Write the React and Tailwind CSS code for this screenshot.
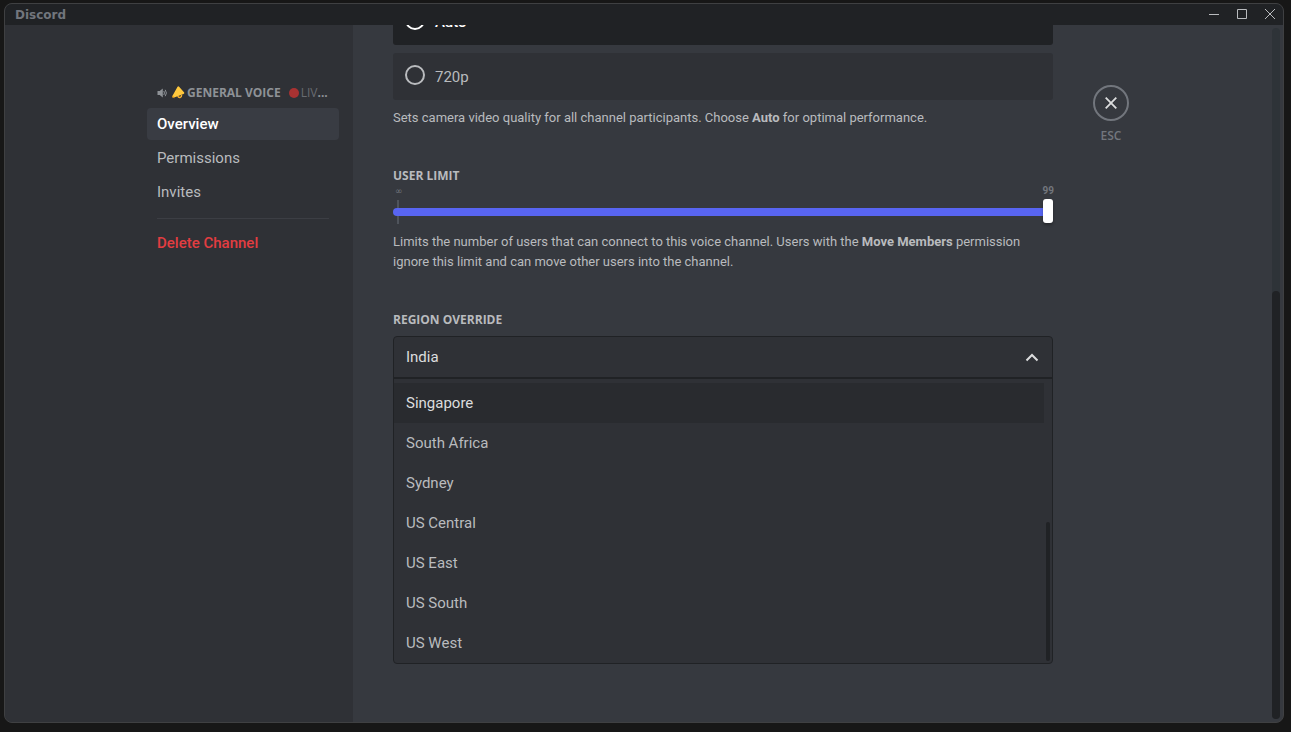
import { useState } from 'react';

const regions = ['Singapore', 'South Africa', 'Sydney', 'US Central', 'US East', 'US South', 'US West'];

function TitleBar() {
  return (
    <header className="flex h-[21px] shrink-0 items-start justify-between bg-[#202225] pl-2.5 text-[#b9bbbe]">
      <span className="pt-[3px] font-['DejaVu_Sans',sans-serif] text-xs leading-4 font-bold text-[#72767d]">Discord</span>
      <div className="-mr-px flex">
        <button type="button" aria-label="Minimize" className="flex h-5 w-7 items-center justify-center">
          <svg width="10" height="10" viewBox="0 0 10 10"><path d="M0 5h10v1H0z" fill="currentColor" /></svg>
        </button>
        <button type="button" aria-label="Maximize" className="flex h-5 w-7 items-center justify-center">
          <svg width="10" height="10" viewBox="0 0 10 10"><path d="M.5.5h9v9h-9z" fill="none" stroke="currentColor" /></svg>
        </button>
        <button type="button" aria-label="Close window" className="flex h-5 w-7 items-center justify-center">
          <svg width="10" height="10" viewBox="0 0 10 10"><path d="M0 0l10 10M10 0L0 10" fill="none" stroke="currentColor" /></svg>
        </button>
      </div>
    </header>
  );
}

function ChannelName() {
  return (
    <h2 className="mb-2 flex h-[15px] items-center px-2.5 font-['Open_Sans',sans-serif] text-xs font-bold text-[#8e9297]">
      <svg width="10" height="10" viewBox="0 0 10 10" className="mr-[5px] shrink-0">
        <path d="M.5 3h2.200L5.800.6v8.800L2.700 7H.5z" fill="currentColor" />
        <path d="M6.800 3q1.300 2 0 4M8.200 1.800q2.400 3.200 0 6.400" fill="none" stroke="currentColor" strokeWidth="1" />
      </svg>
      <svg width="13" height="13" viewBox="0 0 13 13" className="mr-0.5 shrink-0">
        <path d="M5.400.9Q6.200-.2 7.100.7l4.900 5.600q.8 1.200-.5 1.700L2.200 11.500Q.9 12.400.3 11q-.3-.8.5-1.800z" fill="#ffc83d" />
        <path d="M5.800 10q.6 1.900 2.300 1.500T9.600 9" fill="none" stroke="#f5b02e" strokeWidth="1.4" />
        <path d="M.4 10.200l1.800 1.600" stroke="#d67d00" strokeWidth="1" />
      </svg>
      <span className="shrink-0">GENERAL VOICE</span>
      <span className="mr-0.5 ml-2 size-2.5 shrink-0 rounded-full bg-[#a83232]" />
      <span className="font-normal text-[#686b71]">LIV</span>
      <span>...</span>
    </h2>
  );
}

function Sidebar() {
  const item = 'block w-full rounded px-2.5 py-1.5 text-[15px] leading-5';
  return (
    <aside className="flex flex-[1_0_218px] justify-end bg-[#2f3136] pt-[60px] pr-3.5">
      <nav className="w-48">
        <ChannelName />
        <div className="flex flex-col gap-0.5 text-[#b9bbbe]">
          <a href="#overview" className={`${item} bg-[#393c43] font-medium text-white`}>Overview</a>
          <a href="#permissions" className={item}>Permissions</a>
          <a href="#invites" className={item}>Invites</a>
        </div>
        <hr className="mx-2.5 mt-2.5 mb-2 border-[#3c3e44]" />
        <button type="button" className={`${item} text-left font-medium text-[#e23d41]`}>Delete Channel</button>
      </nav>
    </aside>
  );
}

function QualityOption({ label, checked, onChange }) {
  return (
    <label
      className={`flex h-[47px] items-center gap-2.5 rounded-[3px] px-3 text-[15px] leading-5 ${
        checked ? 'bg-[#202225] font-medium text-white' : 'bg-[#2f3136] text-[#b9bbbe]'
      }`}
    >
      <input
        type="radio"
        name="quality"
        checked={checked}
        onChange={onChange}
        className="mb-[3px] grid size-5 appearance-none place-items-center rounded-full border-2 border-current checked:before:size-2.5 checked:before:rounded-full checked:before:bg-current"
      />
      {label}
    </label>
  );
}

function UserLimit() {
  const [limit, setLimit] = useState(99);
  return (
    <section className="mt-10">
      <label htmlFor="limit" className="block font-['Open_Sans',sans-serif] text-xs leading-4 font-bold text-[#b9bbbe]">
        USER LIMIT
      </label>
      <div className="-mr-px flex h-[15px] justify-between pl-0.5 text-[10px] leading-[14px] font-bold text-[#72767d]">
        <span className="font-['DejaVu_Sans',sans-serif] text-[9px] font-normal">∞</span>
        <span>99</span>
      </div>
      <div className="relative h-6">
        <span className="absolute top-px left-1 h-6 w-0.5 bg-[#4f545c]" />
        <input
          id="limit"
          type="range"
          min="0"
          max="99"
          value={limit}
          onChange={(e) => setLimit(Number(e.target.value))}
          style={{ '--fill': `${(limit / 99) * 100}%` }}
          className="relative block h-[26px] w-full appearance-none bg-transparent [&::-webkit-slider-runnable-track]:h-2 [&::-webkit-slider-runnable-track]:rounded [&::-webkit-slider-runnable-track]:bg-[linear-gradient(to_right,#5865f2_var(--fill),#4f545c_var(--fill))] [&::-webkit-slider-thumb]:-mt-[9px] [&::-webkit-slider-thumb]:h-6 [&::-webkit-slider-thumb]:w-2.5 [&::-webkit-slider-thumb]:appearance-none [&::-webkit-slider-thumb]:rounded-[3px] [&::-webkit-slider-thumb]:bg-white [&::-webkit-slider-thumb]:shadow-[0_2px_3px_rgba(0,0,0,0.3)]"
        />
      </div>
      <p className="mt-[9px] text-[13px] leading-5 text-[#b9bbbe]">
        Limits the number of users that can connect to this voice channel. Users with the{' '}
        <strong className="font-bold">Move Members</strong> permission ignore this limit and can move other users
        into the channel.
      </p>
    </section>
  );
}

function RegionOverride() {
  const [region, setRegion] = useState('India');
  return (
    <section className="mt-10">
      <label htmlFor="region" className="block font-['Open_Sans',sans-serif] text-xs leading-4 font-bold text-[#b9bbbe]">
        REGION OVERRIDE
      </label>
      <div className="mt-2 rounded border border-[#202225] bg-[#2f3136]">
        <div className="relative border-b-2 border-[#202225] text-[#dcddde]">
          <select
            id="region"
            value={region}
            onChange={(e) => setRegion(e.target.value)}
            className="block h-10 w-full appearance-none bg-transparent px-3 text-[15px]"
          >
            <option>India</option>
            {regions.map((name) => (
              <option key={name}>{name}</option>
            ))}
          </select>
          <svg width="14" height="10" viewBox="0 0 14 10" className="pointer-events-none absolute top-4 right-[13px]">
            <path d="M1.500 7.500L7 2l5.500 5.500" fill="none" stroke="currentColor" strokeWidth="2" />
          </svg>
        </div>
        <div className="flex pt-1">
          <ul className="min-w-0 flex-1">
            {regions.map((name, i) => (
              <li key={name}>
                <button
                  type="button"
                  onClick={() => setRegion(name)}
                  className={`block h-10 w-full px-3 text-left text-[15px] ${
                    i === 0 ? 'bg-[#292b2f] text-[#dcddde]' : 'text-[#b9bbbe]'
                  }`}
                >
                  {name}
                </button>
              </li>
            ))}
          </ul>
          <div className="flex w-2 flex-col justify-end px-0.5 pb-0.5">
            <span className="h-1/2 rounded-sm bg-[#202225]" />
          </div>
        </div>
      </div>
    </section>
  );
}

export default function App() {
  const [quality, setQuality] = useState('Auto');
  return (
    <div className="flex h-screen bg-[#171717] pt-[3px] pr-[7px] pb-[9px] pl-1 font-['Roboto',sans-serif]">
      <div className="flex flex-1 flex-col overflow-hidden rounded-lg border border-[#3f4042] bg-[#36393f]">
        <TitleBar />
        <div className="flex min-h-0 flex-1">
          <Sidebar />
          <main className="flex min-w-0 flex-[1_1_800px] overflow-hidden">
            <div className="-mt-[27px] w-full max-w-[740px] px-10">
              <div className="flex flex-col gap-2">
                <QualityOption label="Auto" checked={quality === 'Auto'} onChange={() => setQuality('Auto')} />
                <QualityOption label="720p" checked={quality === '720p'} onChange={() => setQuality('720p')} />
              </div>
              <p className="mt-2 text-[13px] leading-5 text-[#b9bbbe]">
                Sets camera video quality for all channel participants. Choose{' '}
                <strong className="font-bold">Auto</strong> for optimal performance.
              </p>
              <UserLimit />
              <RegionOverride />
            </div>
            <div className="flex shrink-0 flex-col items-center pt-[60px] text-[#72767d]">
              <button
                type="button"
                aria-label="Close settings"
                className="flex size-9 items-center justify-center rounded-full border-2 border-current"
              >
                <svg width="12" height="12" viewBox="0 0 12 12" className="text-[#dcddde]">
                  <path d="M.7.700l10.600 10.600M11.300.7L.7 11.300" fill="none" stroke="currentColor" strokeWidth="1.800" />
                </svg>
              </button>
              <span className="mt-[7px] font-['Open_Sans',sans-serif] text-xs leading-4 font-semibold">ESC</span>
            </div>
            <div className="my-[3px] mr-[3px] ml-auto flex w-2 flex-col justify-end rounded bg-[#2e3338]">
              <span className="h-[62%] rounded bg-[#202225]" />
            </div>
          </main>
        </div>
      </div>
    </div>
  );
}
